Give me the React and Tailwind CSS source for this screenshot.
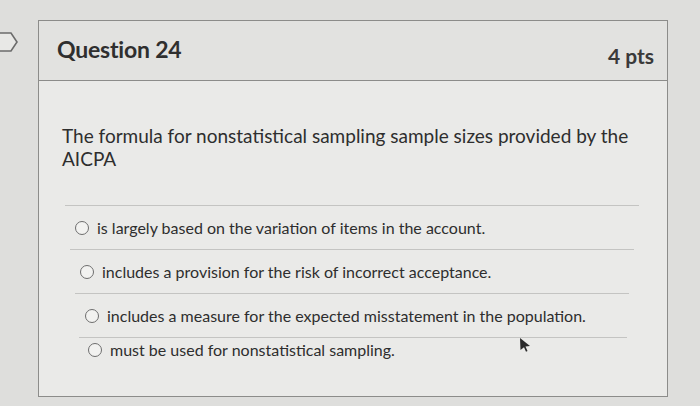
import React from 'react';

const options = [
  { text: 'is largely based on the variation of items in the account.', indent: 'pl-[13px]', line: 'ml-[3px] mr-[4px]' },
  { text: 'includes a provision for the risk of incorrect acceptance.', indent: 'pl-[18px]', line: 'ml-[8px] mr-[9px]' },
  { text: 'includes a measure for the expected misstatement in the population.', indent: 'pl-[23px]', line: 'ml-[13px] mr-[14px]' },
  { text: 'must be used for nonstatistical sampling.', indent: 'pl-[26px]', line: 'ml-[17px] mr-[16px]' },
];

const Radio = () => (
  <span className="w-[14px] h-[14px] rounded-full border-[1.5px] border-[#6e6e6e] bg-[#f2f2f0] shrink-0" />
);

export default function App() {
  return (
    <div
      className="w-[700px] h-[406px] bg-[#dededc] relative overflow-hidden"
      style={{ fontFamily: 'Lato, "Open Sans", sans-serif' }}
    >
      {/* flag tab peeking on the left */}
      <svg className="absolute left-0 top-[31px]" width="20" height="22" viewBox="0 0 20 22">
        <path d="M0 2 H11 L17 11 L11 20 H0" fill="#e8e8e6" stroke="#6b6b6b" strokeWidth="1.6" />
      </svg>

      <div className="absolute left-[38px] top-[20px] w-[630px] h-[377px] border border-[#8c8c8a] bg-[#eaeae8] flex flex-col">
        {/* header */}
        <div className="h-[60px] bg-[#e2e2e0] border-b border-[#8c8c8a] flex items-center justify-between pl-[18px] pr-[13px]">
          <h2 className="text-[23px] font-bold text-[#2f2f2f] tracking-[-0.2px] -mt-[2px]">Question 24</h2>
          <span className="text-[21px] font-bold text-[#3a3a3a] mt-[10px]">4 pts</span>
        </div>

        {/* body */}
        <div className="flex-1 pl-[23px] pr-[10px] pt-[43px]">
          <p className="text-[19px] leading-[23px] text-[#2e2e2e] w-[600px]">
            The formula for nonstatistical sampling sample sizes provided by the AICPA
          </p>

          <div className="mt-[35px] pr-[14px]">
            {options.map((o, i) => (
              <div key={i}>
                <div className={`h-px bg-[#c4c4c2] ${o.line}`} />
                <div className={`h-[43px] flex items-center gap-[8px] ${o.indent} ${i === 3 ? '-mt-[10px]' : ''}`}>
                  <Radio />
                  <span className="text-[16px] text-[#2e2e2e]">{o.text}</span>
                </div>
              </div>
            ))}
          </div>
        </div>
      </div>

      {/* mouse cursor */}
      <svg className="absolute left-[518px] top-[337px]" width="14" height="16" viewBox="0 0 14 16">
        <path d="M2 1 L12 9 L7.5 9.5 L9.5 14 L8 14.8 L6 10.3 L2.5 13 Z" fill="#2a2a2a" />
      </svg>
    </div>
  );
}
